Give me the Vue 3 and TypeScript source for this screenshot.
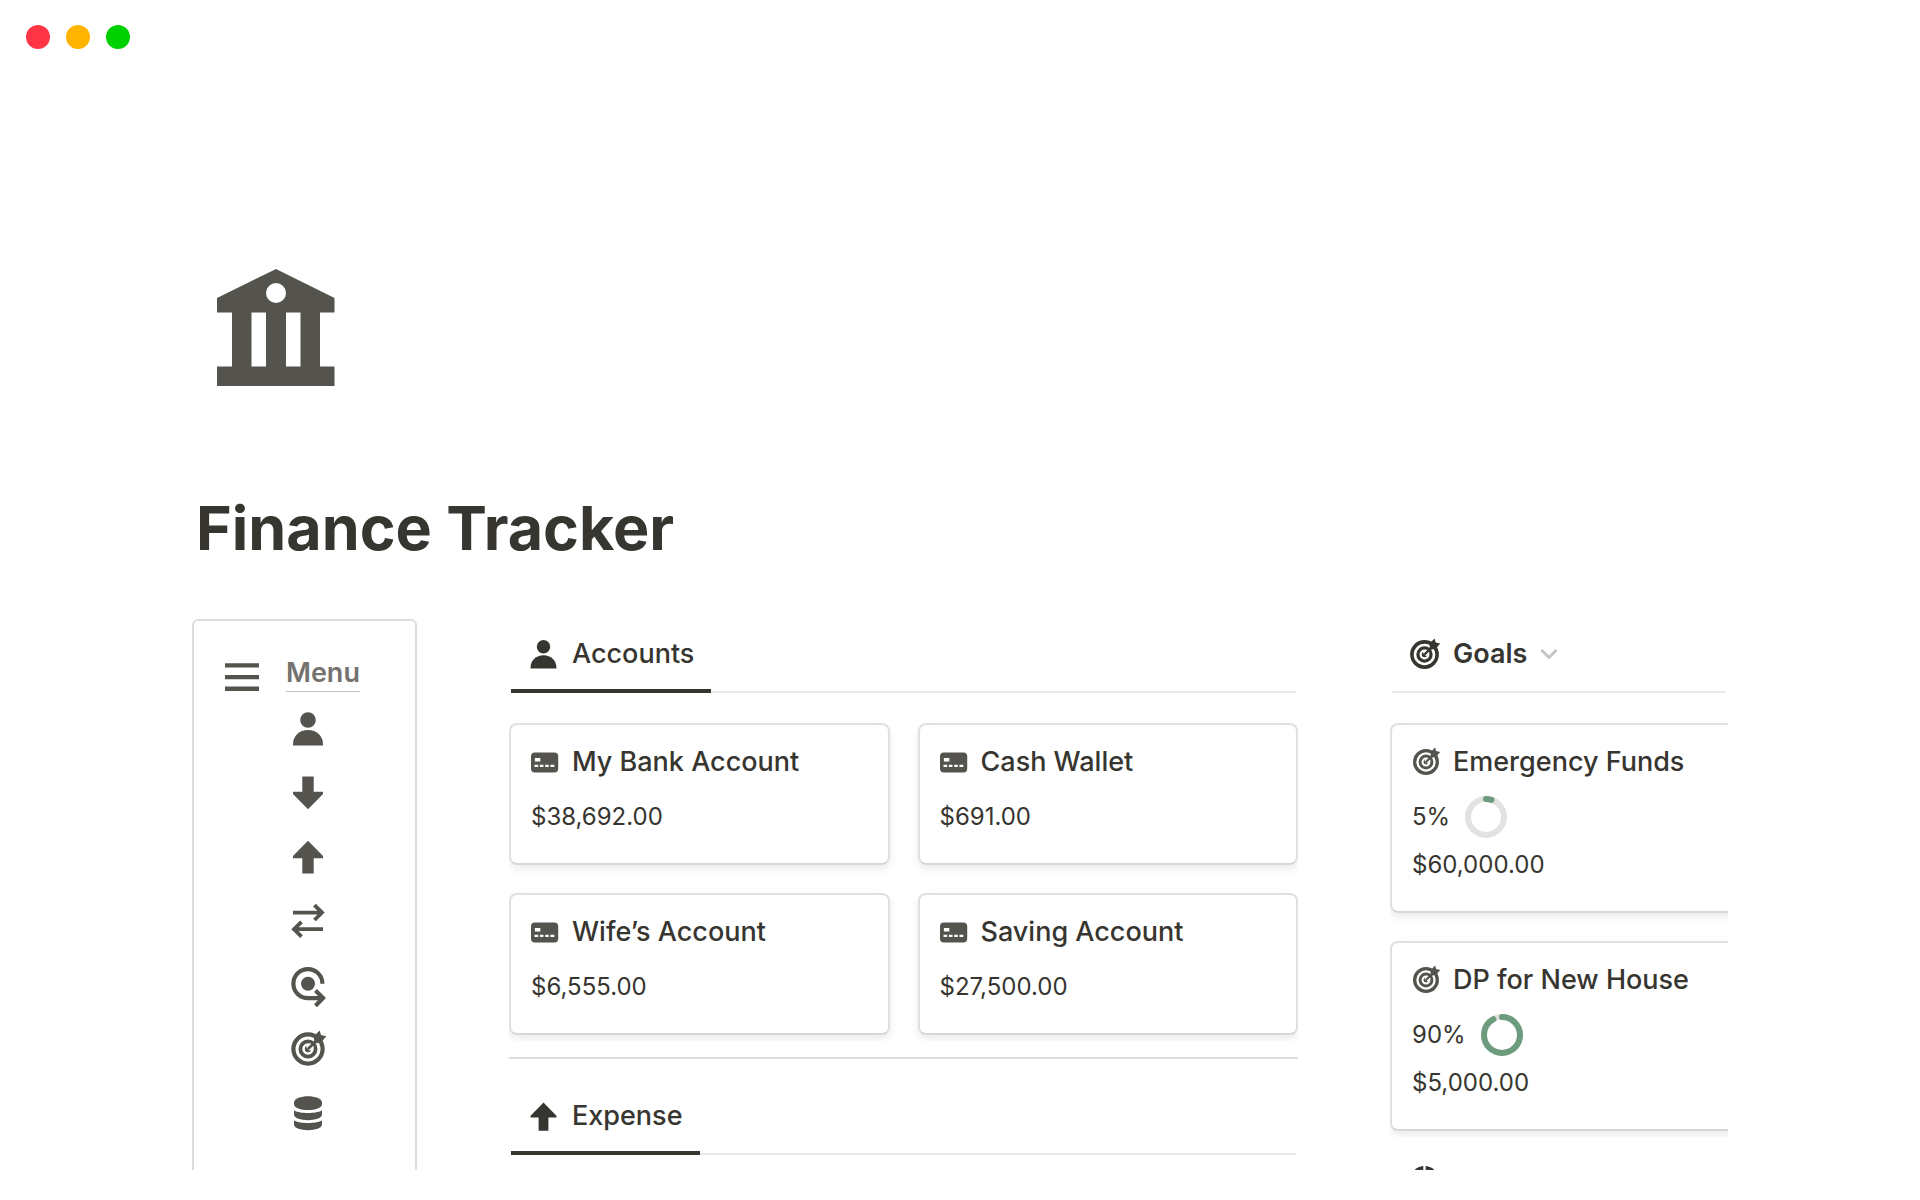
<script setup lang="ts">
import { h, type FunctionalComponent } from 'vue'

type IconName = 'person' | 'down' | 'up' | 'transfer' | 'recurring' | 'target' | 'database' | 'card' | 'globe' | 'menu'

interface Account { name: string; amount: string }
interface Goal { name: string; percent: number; arc: number; amount: string }

// Every glyph is drawn on a 36 x 36 grid
const glyphs: Record<IconName, string> = {
  person: '<circle cx="18" cy="9" r="7.8"/><path d="M3 34.4V33C3 25 9.500 19 18 19S33 25 33 33V34.400Z"/>',
  down: '<path d="M12.300 1.400H23.700V16.800H33V19L18 34.300 3 19V16.800H12.300Z"/>',
  up: '<path d="M12.300 34.600H23.700V19.200H33V17L18 1.700 3 17V19.200H12.300Z"/>',
  transfer:
    '<g fill="none" stroke="currentColor" stroke-width="3.800"><path d="M3 9.600H32M24.500 2.200L32 9.600 24.500 17"/><path d="M33 26.200H4M11.500 18.800L4 26.200 11.500 33.600"/></g>',
  recurring:
    '<circle cx="18" cy="16.700" r="7"/><g fill="none" stroke="currentColor" stroke-width="4.200"><path d="M32.400 16.700A14.500 14.500 0 1 0 18 31.100H33"/><path d="M25.500 23.500L33 31.100 25.500 38.700"/></g>',
  target:
    '<circle cx="18" cy="18" r="3.200"/><g fill="none" stroke="currentColor"><circle cx="18" cy="18" r="14.600" stroke-width="4.200"/><circle cx="18" cy="18" r="7.600" stroke-width="3.800"/><path d="M18 18L22 14" stroke="#fff" stroke-width="5.500"/><path d="M18 18L28 8" stroke-width="2.800"/></g><path d="M24 12.200V5L29.700 -0.500 31 4 36.300 5.300 31 11.400 26.500 12.200Z"/>',
  database:
    '<path d="M4 7.500C4 -1 32 -1 32 7.500V9C32 17 4 17 4 9Z"/><path d="M4 15.300C9 19 27 19 32 15.300V19.500C32 27 4 27 4 19.500Z"/><path d="M4 25.300C9 29 27 29 32 25.300V29.500C32 37 4 37 4 29.500Z"/>',
  card:
    '<path fill-rule="evenodd" d="M5 5.800H30A5 5 0 0 1 35 10.800V26.500A5 5 0 0 1 30 31.500H5A5 5 0 0 1 0 26.500V10.800A5 5 0 0 1 5 5.800ZM5 13V17.500H12V13ZM4.500 21.500V24.500H9.300V21.500ZM11.500 21.500V24.500H16V21.500ZM18.300 21.500V24.500H22.800V21.500ZM25 21.500V24.500H30V21.500Z"/>',
  globe:
    '<path d="M16.600 1.300V18H1.300A16.700 16.700 0 0 1 16.600 1.300ZM19.400 1.300A16.700 16.700 0 0 1 34.700 18H19.400ZM1.500 21H34.500A16.700 16.700 0 0 1 1.500 21Z"/>',
  menu: '<path d="M1 4.200H35V8.600H1ZM1 15.900H35V20.300H1ZM1 27.500H35V31.900H1Z"/>',
}

const Icon: FunctionalComponent<{ name: IconName; size: number }> = (props) =>
  h('svg', {
    viewBox: '0 0 36 36',
    width: props.size,
    height: props.size,
    fill: 'currentColor',
    'aria-hidden': 'true',
    style: { flex: 'none', overflow: 'visible' },
    innerHTML: glyphs[props.name],
  })
Icon.props = ['name', 'size']

const links: { icon: IconName; label: string }[] = [
  { icon: 'person', label: 'Accounts' },
  { icon: 'down', label: 'Income' },
  { icon: 'up', label: 'Expense' },
  { icon: 'transfer', label: 'Transfer' },
  { icon: 'recurring', label: 'Recurring' },
  { icon: 'target', label: 'Goals' },
  { icon: 'database', label: 'Database' },
]

const accounts: Account[] = [
  { name: 'My Bank Account', amount: '$38,692.00' },
  { name: 'Cash Wallet', amount: '$691.00' },
  { name: 'Wife’s Account', amount: '$6,555.00' },
  { name: 'Saving Account', amount: '$27,500.00' },
]

const goals: Goal[] = [
  { name: 'Emergency Funds', percent: 5, arc: 5, amount: '$60,000.00' },
  { name: 'DP for New House', percent: 90, arc: 92, amount: '$5,000.00' },
]
</script>

<template>
  <div class="window">
    <header class="window-bar">
      <span class="light red"></span>
      <span class="light amber"></span>
      <span class="light green"></span>
    </header>

    <main class="page">
      <svg class="page-icon" viewBox="0 0 118 118" aria-hidden="true">
        <path
          fill-rule="evenodd"
          d="M59 0L117.500 29V43.500H103V97.500H117.500V117H0V97.500H15V43.500H0V29ZM59 14A10 10 0 1 0 59 34A10 10 0 1 0 59 14ZM34.500 43.500V97.500H49V43.500ZM69 43.500V97.500H83.500V43.500Z"
        />
      </svg>
      <h1 class="page-title">Finance Tracker</h1>

      <div class="board">
        <nav class="menu" aria-label="Menu">
          <div class="menu-head">
            <Icon name="menu" :size="36" />
            <a class="menu-title" href="#menu">Menu</a>
          </div>
          <a v-for="link in links" :key="link.label" class="menu-link" :href="'#' + link.label" :aria-label="link.label">
            <Icon :name="link.icon" :size="36" />
          </a>
        </nav>

        <div class="column">
          <section>
            <div class="tabs">
              <button class="tab active" type="button"><Icon name="person" :size="31" />Accounts</button>
            </div>
            <div class="cards two">
              <article v-for="account in accounts" :key="account.name" class="card">
                <h2 class="card-title"><Icon name="card" :size="28" />{{ account.name }}</h2>
                <p class="row">{{ account.amount }}</p>
              </article>
            </div>
          </section>
          <hr class="divider" />
          <section>
            <div class="tabs">
              <button class="tab active" type="button"><Icon name="up" :size="31" />Expense</button>
            </div>
          </section>
        </div>

        <div class="column">
          <section>
            <div class="tabs">
              <button class="tab strong" type="button">
                <Icon name="target" :size="31" />Goals
                <svg class="chevron" viewBox="0 0 18 12" width="18" height="12" aria-hidden="true">
                  <path d="M1.500 2L9 9.500 16.500 2" fill="none" stroke="currentColor" stroke-width="2.800" />
                </svg>
              </button>
            </div>
            <div class="cards bleed">
              <article v-for="goal in goals" :key="goal.name" class="card">
                <h2 class="card-title"><Icon name="target" :size="28" />{{ goal.name }}</h2>
                <p class="row">
                  {{ goal.percent }}%
                  <svg class="ring" viewBox="0 0 42 42" width="42" height="42" aria-hidden="true">
                    <circle class="ring-track" cx="21" cy="21" r="18" />
                    <circle class="ring-value" cx="21" cy="21" r="18" pathLength="100" :stroke-dasharray="`${goal.arc} 100`" />
                  </svg>
                </p>
                <p class="row">{{ goal.amount }}</p>
              </article>
            </div>
          </section>
          <section class="next">
            <div class="tabs">
              <button class="tab strong" type="button" aria-label="Overview"><Icon name="globe" :size="31" /></button>
            </div>
          </section>
        </div>
      </div>
    </main>
  </div>
</template>

<style>
body {
  background: #fff;
}
</style>

<style scoped>
.window {
  box-sizing: border-box;
  display: flex;
  flex-direction: column;
  height: 100vh;
  padding-bottom: 30px;
  overflow: hidden;
  background: #fff;
  color: #37352f;
  font-family: Inter, "Liberation Sans", sans-serif;
}

.window-bar {
  display: flex;
  flex: none;
  gap: 16px;
  padding: 25px 26px;
}

.light {
  width: 24px;
  height: 24px;
  border-radius: 50%;
}

.red { background: #ff3546; }
.amber { background: #ffb400; }
.green { background: #00d100; }

.page {
  display: flex;
  flex: 1;
  flex-direction: column;
  min-height: 0;
  padding: 195px 10% 0;
}

.page-icon {
  flex: none;
  width: 118px;
  height: 118px;
  margin-left: 25px;
  fill: #55534e;
}

.page-title {
  flex: none;
  margin: 103px 0 53px 4px;
  font-size: 61px;
  font-weight: 700;
  line-height: 76px;
}

.board {
  display: grid;
  flex: 1;
  grid-template-columns: 225px minmax(0, 1fr) 338px;
  gap: 92px;
  min-height: 0;
  overflow: hidden;
}

.menu {
  display: flex;
  flex-direction: column;
  align-items: center;
  gap: 28px;
  height: 640px;
  padding: 34px 0 0 6px;
  border: 2px solid #dddddc;
  border-radius: 6px;
  color: #55534e;
}

.menu-head {
  display: flex;
  align-items: flex-start;
  align-self: stretch;
  gap: 26px;
  height: 44px;
  margin-bottom: -16px;
  padding-left: 24px;
}

.menu-head > svg {
  margin-top: 4px;
}

.menu-title {
  border-bottom: 1px solid #c4c3c1;
  color: #73726e;
  font-size: 27px;
  font-weight: 600;
  line-height: 36px;
  text-decoration: none;
}

.menu-link {
  display: flex;
  color: inherit;
}

.column {
  min-width: 0;
}

.tabs {
  display: flex;
  height: 72px;
  margin: 0 2px;
  border-bottom: 2px solid #e9e9e8;
}

.tab {
  display: flex;
  align-items: center;
  gap: 13px;
  box-sizing: border-box;
  height: 74px;
  padding: 0 17px;
  border: 0;
  border-bottom: 4px solid transparent;
  background: none;
  color: inherit;
  font: 500 27px/36px Inter, "Liberation Sans", sans-serif;
}

.tab.active {
  border-bottom-color: #37352f;
}

.tab.strong {
  font-weight: 600;
}

.chevron {
  color: #c4c3c1;
}

.cards {
  display: grid;
  gap: 28px;
  padding: 30px 0 6px;
  overflow: hidden;
}

.cards.two {
  grid-template-columns: 1fr 1fr;
}

.cards.bleed {
  width: 380px;
}

.card {
  padding: 19px 20px 22px;
  border: 2px solid #e0e0df;
  border-bottom-color: #d7d7d6;
  border-radius: 8px;
  box-shadow: 0 4px 8px rgba(15, 15, 15, 0.08);
}

.card-title {
  display: flex;
  align-items: center;
  gap: 13px;
  margin: 0 0 13px;
  font-size: 27px;
  font-weight: 500;
  line-height: 36px;
  white-space: nowrap;
}

.card-title svg {
  color: #55534e;
}

.row {
  display: flex;
  align-items: center;
  gap: 15px;
  margin: 0;
  font-size: 24px;
  line-height: 48px;
}

.ring {
  fill: none;
  stroke-width: 6;
  transform: rotate(-90deg);
}

.ring-track { stroke: #e3e2e0; }

.ring-value {
  stroke: #6c9b7d;
  stroke-linecap: round;
}

.divider {
  height: 2px;
  margin: 16px 0 22px;
  border: 0;
  background: #dddddc;
}

.next {
  margin-top: 8px;
}
</style>
